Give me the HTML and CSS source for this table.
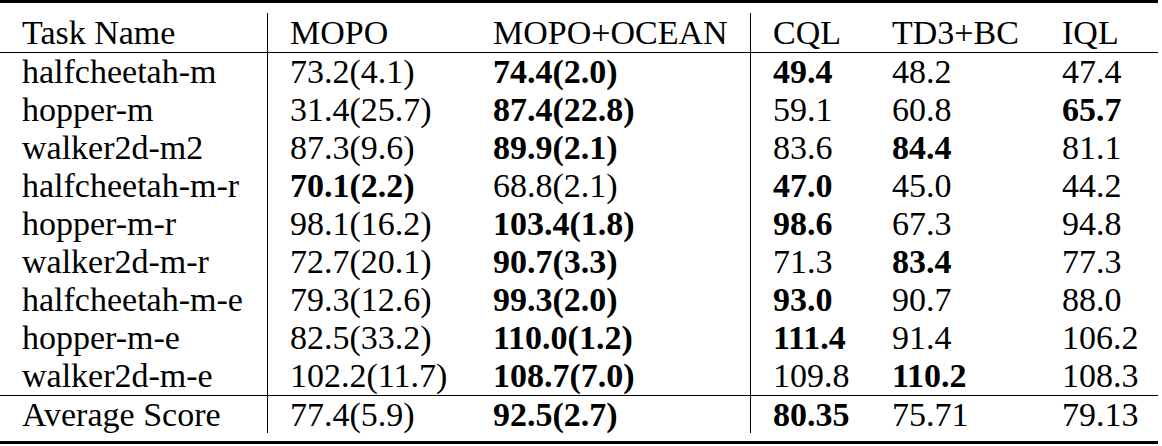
FILE: index.html
```html
<!DOCTYPE html>
<html lang="en">
<head>
    <meta charset="UTF-8">
    <meta name="viewport" content="width=device-width, initial-scale=1.0">
    <title>Offline RL Results</title>
    <link rel="stylesheet" href="styles.css">
</head>
<body>
    <div class="table-wrap">
        <table class="results">
            <colgroup>
                <col class="c-task">
                <col class="c-mopo">
                <col class="c-ocean">
                <col class="c-cql">
                <col class="c-td3">
                <col class="c-iql">
            </colgroup>
            <thead>
                <tr>
                    <th class="sep">Task Name</th>
                    <th>MOPO</th>
                    <th class="sep">MOPO+OCEAN</th>
                    <th>CQL</th>
                    <th>TD3+BC</th>
                    <th>IQL</th>
                </tr>
            </thead>
            <tbody>
                <tr>
                    <td class="sep">halfcheetah-m</td>
                    <td>73.2(4.1)</td>
                    <td class="sep"><b>74.4(2.0)</b></td>
                    <td><b>49.4</b></td>
                    <td>48.2</td>
                    <td>47.4</td>
                </tr>
                <tr>
                    <td class="sep">hopper-m</td>
                    <td>31.4(25.7)</td>
                    <td class="sep"><b>87.4(22.8)</b></td>
                    <td>59.1</td>
                    <td>60.8</td>
                    <td><b>65.7</b></td>
                </tr>
                <tr>
                    <td class="sep">walker2d-m2</td>
                    <td>87.3(9.6)</td>
                    <td class="sep"><b>89.9(2.1)</b></td>
                    <td>83.6</td>
                    <td><b>84.4</b></td>
                    <td>81.1</td>
                </tr>
                <tr>
                    <td class="sep">halfcheetah-m-r</td>
                    <td><b>70.1(2.2)</b></td>
                    <td class="sep">68.8(2.1)</td>
                    <td><b>47.0</b></td>
                    <td>45.0</td>
                    <td>44.2</td>
                </tr>
                <tr>
                    <td class="sep">hopper-m-r</td>
                    <td>98.1(16.2)</td>
                    <td class="sep"><b>103.4(1.8)</b></td>
                    <td><b>98.6</b></td>
                    <td>67.3</td>
                    <td>94.8</td>
                </tr>
                <tr>
                    <td class="sep">walker2d-m-r</td>
                    <td>72.7(20.1)</td>
                    <td class="sep"><b>90.7(3.3)</b></td>
                    <td>71.3</td>
                    <td><b>83.4</b></td>
                    <td>77.3</td>
                </tr>
                <tr>
                    <td class="sep">halfcheetah-m-e</td>
                    <td>79.3(12.6)</td>
                    <td class="sep"><b>99.3(2.0)</b></td>
                    <td><b>93.0</b></td>
                    <td>90.7</td>
                    <td>88.0</td>
                </tr>
                <tr>
                    <td class="sep">hopper-m-e</td>
                    <td>82.5(33.2)</td>
                    <td class="sep"><b>110.0(1.2)</b></td>
                    <td><b>111.4</b></td>
                    <td>91.4</td>
                    <td>106.2</td>
                </tr>
                <tr>
                    <td class="sep">walker2d-m-e</td>
                    <td>102.2(11.7)</td>
                    <td class="sep"><b>108.7(7.0)</b></td>
                    <td>109.8</td>
                    <td><b>110.2</b></td>
                    <td>108.3</td>
                </tr>
            </tbody>
            <tfoot>
                <tr>
                    <td class="sep">Average Score</td>
                    <td>77.4(5.9)</td>
                    <td class="sep"><b>92.5(2.7)</b></td>
                    <td><b>80.35</b></td>
                    <td>75.71</td>
                    <td>79.13</td>
                </tr>
            </tfoot>
        </table>
    </div>
</body>
</html>
```

FILE: styles.css
```css
body {
    margin: 0;
    background: #fff;
    color: #000;
    font-family: "Liberation Serif", "Times New Roman", serif;
}
.table-wrap {
    width: 1158px;
    border-top: 3px solid #000;
    border-bottom: 3px solid #000;
    padding-top: 10px;
    padding-bottom: 8px;
}
.results {
    width: 1158px;
    table-layout: fixed;
    border-collapse: separate;
    border-spacing: 0;
    font-size: 34px;
}
.c-task { width: 268px; }
.c-mopo { width: 203px; }
.c-ocean { width: 280px; }
.c-cql { width: 119px; }
.c-td3 { width: 170px; }
.c-iql { width: 118px; }

.results th,
.results td {
    padding: 0 0 0 22px;
    text-align: left;
    font-weight: normal;
    white-space: nowrap;
    line-height: 38px;
}
.results th {
    line-height: 39px;
    padding-bottom: 0;
    border-bottom: 1px solid #000;
}
.results tfoot td {
    line-height: 37px;
    border-top: 1px solid #000;
}
.results .sep {
    border-right: 1px solid #000;
}
.results b {
    font-weight: bold;
}
```
